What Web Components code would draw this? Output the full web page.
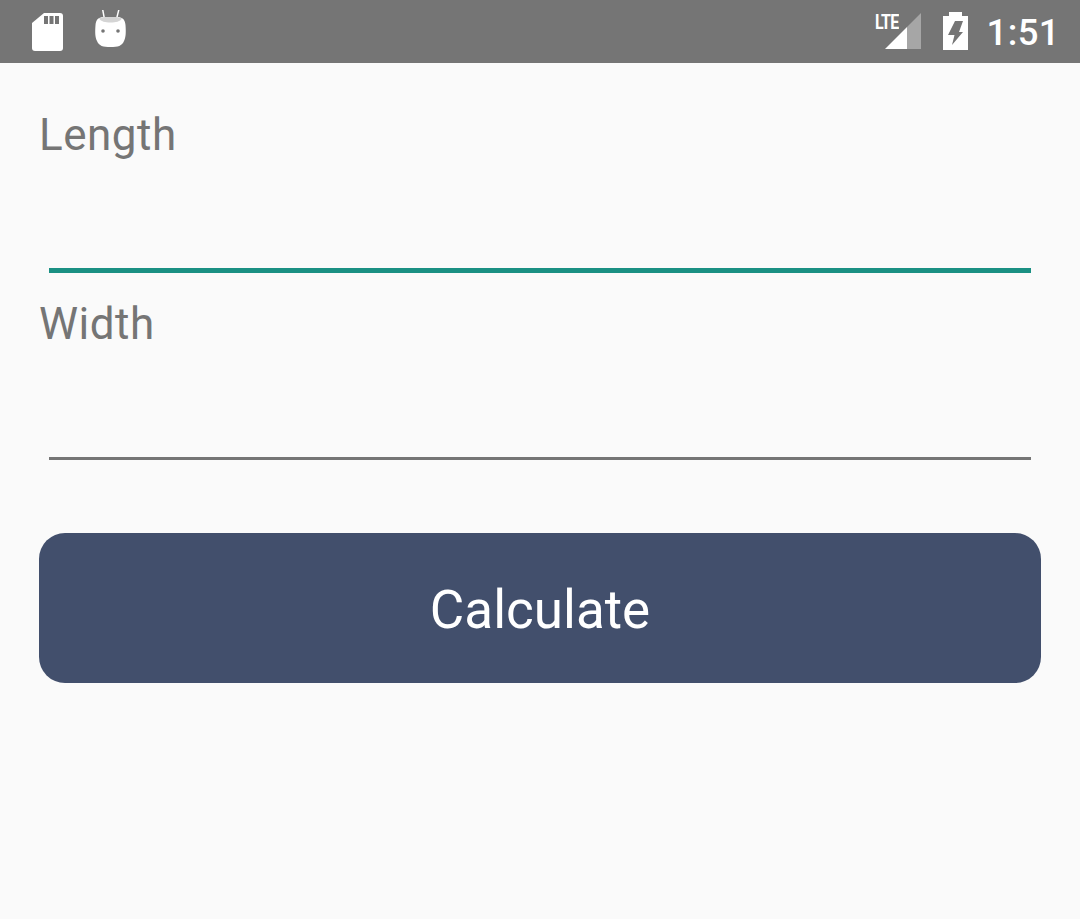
<!DOCTYPE html>
<html>
<head>
<meta charset="utf-8">
<style>
  html, body { margin: 0; padding: 0; background: #fafafa; }
  body { font-family: Roboto, "Liberation Sans", sans-serif; height: 919px; overflow: hidden; }
</style>
</head>
<body>
<status-bar time="1:51"></status-bar>
<main-form>
  <text-field label="Length" focused></text-field>
  <text-field label="Width"></text-field>
  <big-button>Calculate</big-button>
</main-form>

<script>
// Barra de estado de arriba
class StatusBar extends HTMLElement {
  constructor() {
    super();
    this.attachShadow({mode: 'open'});
  }
  connectedCallback() {
    this.shadowRoot.innerHTML = `
      <style>
        :host { display: flex; align-items: flex-start; height: 63px; background: #757575; color: #fff; }
        .izq { display: flex; align-items: flex-start; margin-left: 32px; }
        .der { display: flex; align-items: flex-start; margin-left: auto; margin-right: 20px; }
        svg { display: block; }
        .sd { margin-top: 13px; }
        .robot { margin: 10px 0 0 32px; }
        .lte { position: relative; width: 45px; height: 37px; margin: 13px 22px 0 0; }
        .lte svg { position: absolute; left: 0; top: 0; }
        .lte span { position: absolute; left: -1px; top: -1px; font: 700 20px/20px Roboto, sans-serif; letter-spacing: -1px; transform: scaleX(.8); transform-origin: left top; }
        .bateria { margin-top: 12px; }
        .hora { font-size: 36.500px; font-weight: 500; line-height: 42px; letter-spacing: .4px; margin: 12px 0 0 19px; }
      </style>
      <div class="izq">
        <svg class="sd" width="31" height="38" viewBox="0 0 31 38">
          <path fill="#fff" d="M12 0H28a3 3 0 0 1 3 3V35a3 3 0 0 1-3 3H3a3 3 0 0 1-3-3V10Z"/>
          <path fill="#757575" d="M12 3h4v8h-4zM17.500 3h4v8h-4zM23 3h4v8h-4z"/>
        </svg>
        <svg class="robot" width="31" height="37" viewBox="0 0 31 37">
          <path fill="#fff" d="M7 0h1.500L10 8H8.500ZM23 0h1.500L22.500 8H21Z"/>
          <path fill="#fff" d="M9 7H22C27 7 30 9 30.500 15 31 22 31 27 29 31 27 36 23 37 15.500 37 8 37 4 36 2 31 0 27 0 22 .5 15 1 9 4 7 9 7Z"/>
          <path fill="#d4d4d4" d="M4 8.500C7 7 10 7 15.500 7s8.500 0 11.500 1.500C25 11.500 21 12.500 15.500 12.500S6 11.500 4 8.500Z"/>
          <circle cx="8" cy="21" r="1.800" fill="#757575"/>
          <circle cx="23" cy="21" r="1.800" fill="#757575"/>
        </svg>
      </div>
      <div class="der">
        <div class="lte">
          <svg width="45" height="37" viewBox="0 0 45 37">
            <path fill="#fff" fill-opacity=".36" d="M45 0V36H31V14Z"/>
            <path fill="#fff" d="M31 14V36H9Z"/>
          </svg>
          <span>LTE</span>
        </div>
        <svg class="bateria" width="25" height="38" viewBox="0 0 25 38">
          <path fill="#fff" d="M6 0H19V4H25V38H0V4H6Z"/>
          <path fill="#757575" d="M12 9H20L16 20H20L9 33 11.500 23H5Z"/>
        </svg>
        <span class="hora">${this.getAttribute('time')}</span>
      </div>
    `;
  }
}
customElements.define('status-bar', StatusBar);

// Contenedor del formulario
class MainForm extends HTMLElement {
  constructor() {
    super();
    this.attachShadow({mode: 'open'});
    this.shadowRoot.innerHTML = `
      <style>
        :host { display: flex; flex-direction: column; padding: 39px 39px 0; }
      </style>
      <slot></slot>
    `;
  }
}
customElements.define('main-form', MainForm);

// Campo de texto con su etiqueta y la línea de abajo
class TextField extends HTMLElement {
  constructor() {
    super();
    this.attachShadow({mode: 'open'});
  }
  connectedCallback() {
    let enfocado = this.hasAttribute('focused');
    this.shadowRoot.innerHTML = `
      <style>
        :host { display: flex; flex-direction: column; height: 189px; }
        .etiqueta { font-size: 44px; line-height: 52px; height: 52px; letter-spacing: .5px; color: #757575; margin-top: 7px; }
        .linea { margin: 0 10px; height: ${enfocado ? 5 : 3}px; background: ${enfocado ? '#1a9083' : '#757575'}; margin-top: 107px; }
      </style>
      <div class="etiqueta">${this.getAttribute('label')}</div>
      <div class="linea"></div>
    `;
  }
}
customElements.define('text-field', TextField);

// Botón grande de calcular
class BigButton extends HTMLElement {
  constructor() {
    super();
    this.attachShadow({mode: 'open'});
    this.shadowRoot.innerHTML = `
      <style>
        :host { display: flex; align-items: center; justify-content: center; box-sizing: border-box; height: 150px; padding-top: 4px; margin-top: 53px; border-radius: 26px; background: #424f6c; color: #fff; font-size: 53px; }
      </style>
      <slot></slot>
    `;
  }
}
customElements.define('big-button', BigButton);
</script>
</body>
</html>
